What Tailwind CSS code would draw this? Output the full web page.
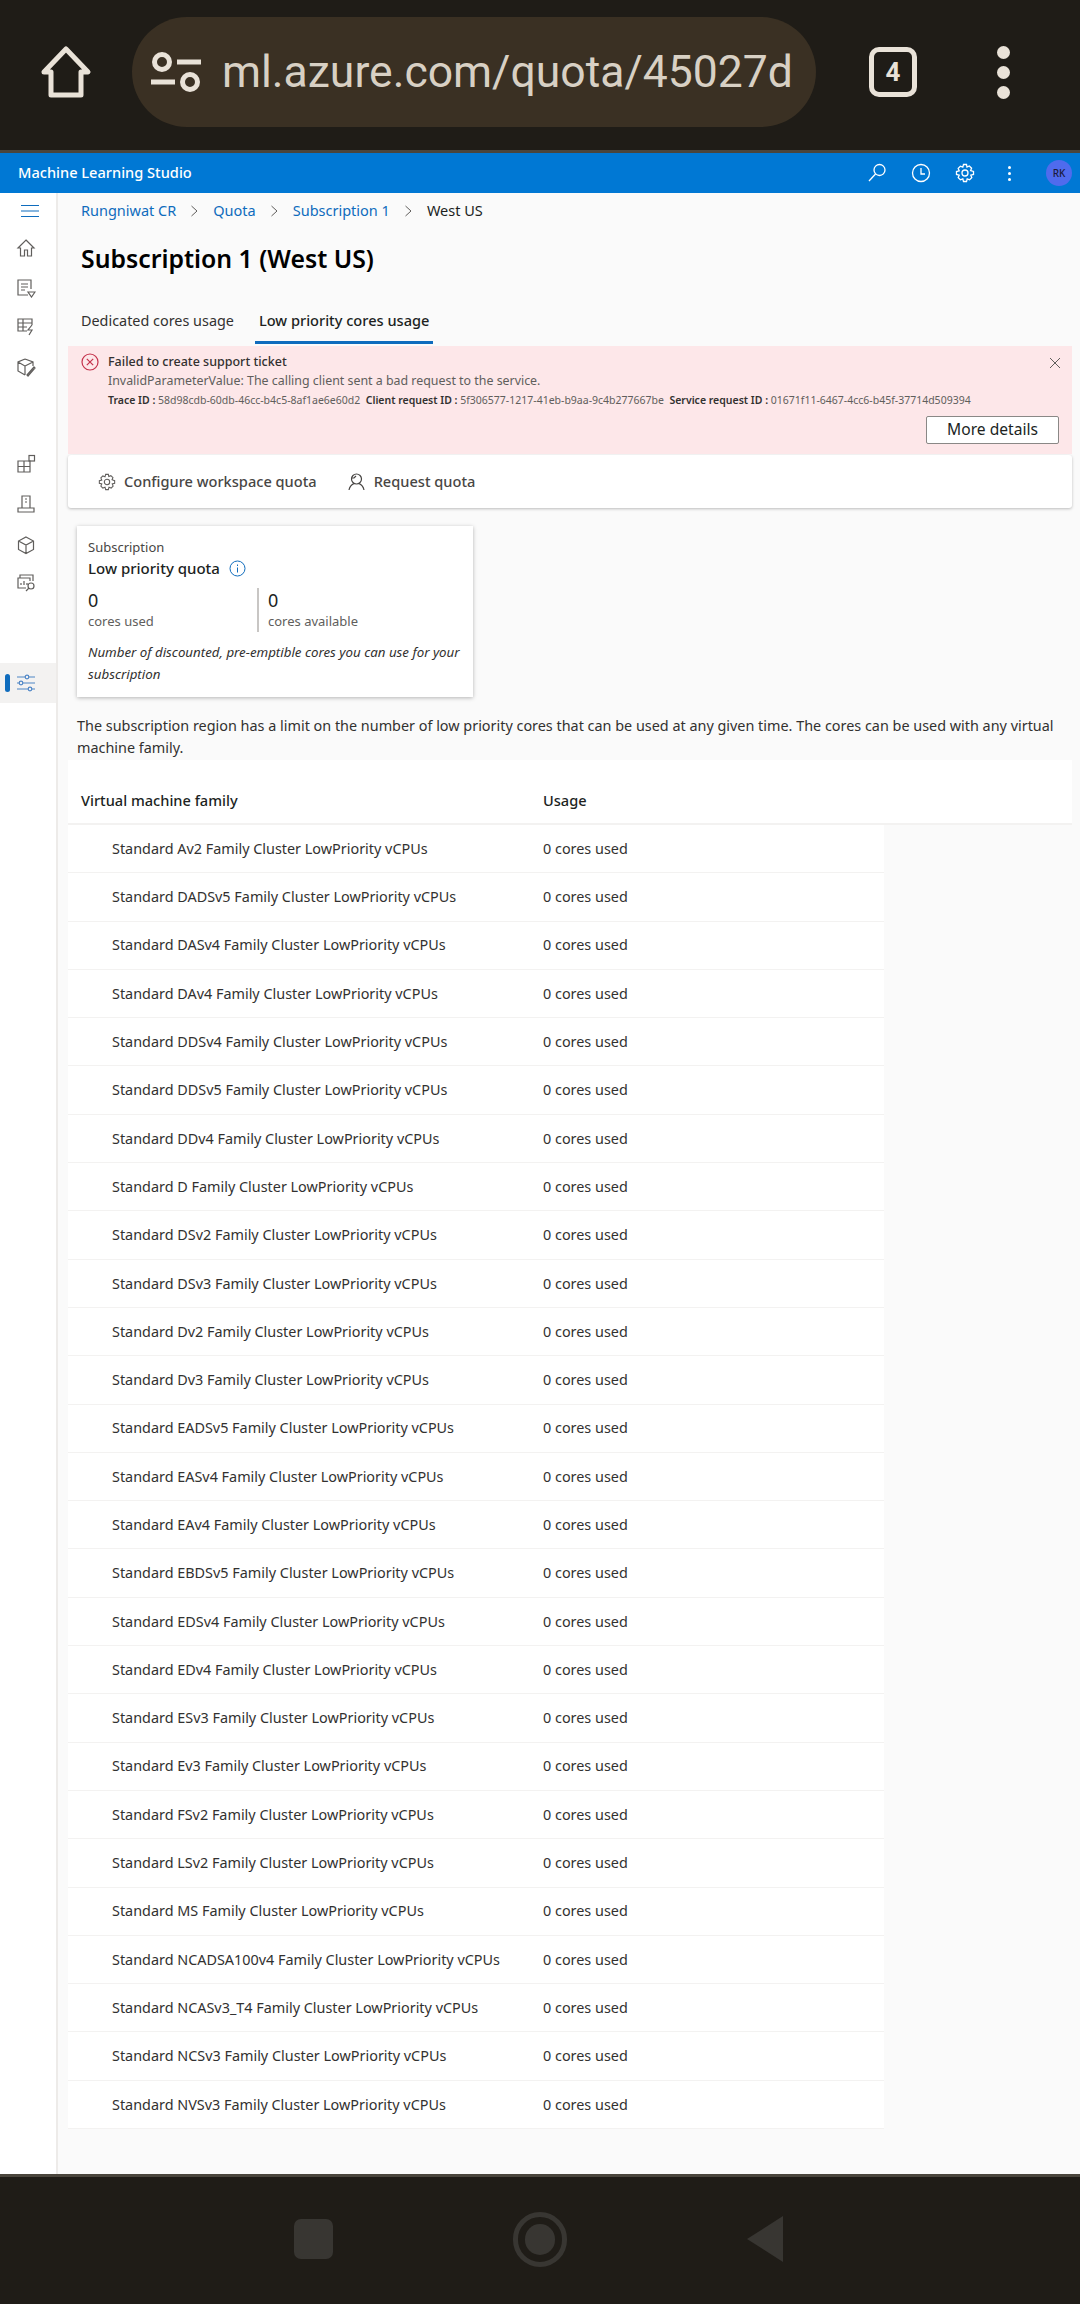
<!DOCTYPE html>
<html lang="en">

<head>
    <meta charset="UTF-8" />
    <title>Quota - Machine Learning Studio</title>
    <script src="https://cdn.jsdelivr.net/npm/@tailwindcss/browser@4"></script>
</head>

<body class="w-[1080px] h-[2304px] overflow-hidden flex flex-col bg-[#fafafa] font-['Noto_Sans','Open_Sans',sans-serif] text-[#201f1e]">
    <!-- Phone browser bar -->
    <header class="h-[153px] shrink-0 bg-[#1f1c17] border-b-[3px] border-[#4a453c] flex items-start pt-[17px] text-[#e9e2d8]">
        <div class="w-[132px] h-[110px] flex items-center justify-center">
            <svg width="52" height="54" viewBox="0 0 52 54" fill="none" stroke="currentColor" stroke-width="5" stroke-linejoin="round">
                <path d="M26 4 L48 27 H41 V50 H11 V27 H4 Z" />
            </svg>
        </div>
        <div class="w-[684px] h-[110px] rounded-[55px] bg-[#3a3023] flex items-center pl-[19px] pr-[23px]">
            <svg class="shrink-0" width="50" height="40" viewBox="0 0 50 40" fill="none" stroke="currentColor" stroke-width="5">
                <circle cx="11" cy="10" r="7.5" />
                <path d="M26 10 H50 M0 30 H24" />
                <circle cx="39" cy="30" r="7.5" />
            </svg>
            <div class="ml-[21px] overflow-hidden whitespace-nowrap text-[44.5px] leading-[60px] font-['Roboto',sans-serif] text-[#d8d0c4]">ml.azure.com/quota/45027d3f</div>
        </div>
        <div class="w-[48px] h-[50px] ml-[53px] mt-[30px] rounded-[10px] border-[5px] border-[#e9e2d8] flex items-center justify-center text-[26px] font-bold font-['Roboto',sans-serif]">4</div>
        <div class="w-[13px] h-[110px] ml-[80px] flex flex-col items-center justify-center gap-[7px]">
            <span class="w-[13px] h-[13px] rounded-full bg-[#e9e2d8]"></span>
            <span class="w-[13px] h-[13px] rounded-full bg-[#e9e2d8]"></span>
            <span class="w-[13px] h-[13px] rounded-full bg-[#e9e2d8]"></span>
        </div>
    </header>

    <!-- Studio top bar -->
    <div class="h-[40px] shrink-0 bg-[#0078d4] flex items-center pl-[18px] pr-[8px] text-white">
        <span class="text-[14.6px] font-medium">Machine Learning Studio</span>
        <div class="ml-auto flex items-center gap-[24px]">
            <svg width="20" height="20" viewBox="0 0 20 20" fill="none" stroke="currentColor" stroke-width="1.3">
                <circle cx="12.5" cy="7" r="5.5" /><path d="M8.5 11 L2 18" />
            </svg>
            <svg width="20" height="20" viewBox="0 0 20 20" fill="none" stroke="currentColor" stroke-width="1.3">
                <circle cx="10" cy="10" r="8.5" /><path d="M10 5 V11 H14" />
            </svg>
            <svg width="20" height="20" viewBox="0 0 20 20" fill="none" stroke="currentColor" stroke-width="1.3">
                <circle cx="10" cy="10" r="3" />
                <path d="M8.5 1.5 H11.5 L12 4 L14.3 3 L16.6 5.2 L15.6 7.5 L18.5 8.5 V11.5 L15.8 12.2 L16.8 14.6 L14.6 16.8 L12.2 15.8 L11.5 18.5 H8.5 L7.8 15.8 L5.4 16.8 L3.2 14.6 L4.2 12.2 L1.5 11.5 V8.5 L4.2 7.8 L3.2 5.4 L5.4 3.2 L7.8 4.2 Z" />
            </svg>
            <div class="w-[20px] mr-[3px] flex flex-col items-center gap-[3px]">
                <span class="w-[3px] h-[3px] rounded-full bg-white"></span>
                <span class="w-[3px] h-[3px] rounded-full bg-white"></span>
                <span class="w-[3px] h-[3px] rounded-full bg-white"></span>
            </div>
            <div class="w-[26px] h-[26px] rounded-full bg-[#4f6bed] text-[#1b1a3a] text-[10px] font-medium flex items-center justify-center">RK</div>
        </div>
    </div>

    <div class="flex-1 flex min-h-0">
        <!-- Left rail -->
        <nav class="w-[58px] shrink-0 bg-white border-r-2 border-[#edebe9] flex flex-col items-center text-[#605e5c] pt-[11px]">
            <svg class="ml-[4px]" width="20" height="14" viewBox="0 0 20 14" stroke="#0f6cbd" stroke-width="1.2"><path d="M1 1.5 H19 M1 7 H19 M1 12.5 H19" /></svg>
            <svg class="mt-[20px] -ml-[5px]" width="20" height="20" viewBox="0 0 20 20" fill="none" stroke="currentColor" stroke-width="1.2"><path d="M10 2 L18 10 H15.5 V18 H11.5 V12 H8.5 V18 H4.5 V10 H2 Z" /></svg>
            <svg class="mt-[20px] -ml-[5px]" width="20" height="20" viewBox="0 0 20 20" fill="none" stroke="currentColor" stroke-width="1.2"><path d="M12 17 H2 V2 H15 V11 M5 6 H12 M5 9 H12 M5 12 H9 M12 14 H19 L15.5 19 Z" /></svg>
            <svg class="mt-[18px] -ml-[5px]" width="20" height="20" viewBox="0 0 20 20" fill="none" stroke="currentColor" stroke-width="1.2"><path d="M11 15 H2 V3 H16 V9 M2 7 H16 M7 3 V15 M2 11 H11 M16 9 L12 14 H16 L13 19" /></svg>
            <svg class="mt-[21px] -ml-[5px]" width="20" height="20" viewBox="0 0 20 20" fill="none" stroke="currentColor" stroke-width="1.2"><path d="M9 2 L17 5 V9 M9 2 L2 5 V14 L9 18 M2 5 L9 9 V18 M9 9 L17 5 M11 18 L18 10 L19 11 L12 19 Z" /></svg>
            <svg class="mt-[77px] -ml-[5px]" width="20" height="20" viewBox="0 0 20 20" fill="none" stroke="currentColor" stroke-width="1.2"><path d="M2 7 H14 V18 H2 Z M8 7 V18 M2 12.5 H14" /><rect x="13" y="1.5" width="5.5" height="5.5" /></svg>
            <svg class="mt-[20px] -ml-[5px]" width="20" height="20" viewBox="0 0 20 20" fill="none" stroke="currentColor" stroke-width="1.2"><path d="M6 14 V2 H14 V14 M9 5 H11 M9 8 H11 M2 18 V14 H18 V18 Z" /></svg>
            <svg class="mt-[21px] -ml-[5px]" width="20" height="20" viewBox="0 0 20 20" fill="none" stroke="currentColor" stroke-width="1.2"><path d="M10 2 L17.5 6 V14.5 L10 18.5 L2.5 14.5 V6 Z M2.5 6 L10 10 L17.5 6 M10 10 V18.5" /></svg>
            <svg class="mt-[18px] -ml-[5px]" width="20" height="20" viewBox="0 0 20 20" fill="none" stroke="currentColor" stroke-width="1.2"><path d="M10 15 H2 V5 H14 V8 M4 5 V2 H17 V8 M5 12 V10 M8 12 V8 M11 12 V10" /><circle cx="15" cy="13" r="3" /><path d="M13 15 L10 18" /></svg>
            <div class="relative mt-[70px] w-full h-[40px] bg-[#f3f2f1] flex items-center justify-center pr-[4px]">
                <span class="absolute left-[5px] top-[11px] w-[5px] h-[18px] rounded bg-[#0f6cbd]"></span>
                <svg width="20" height="18" viewBox="0 0 20 18" fill="none" stroke="#4f86c6" stroke-width="1.2">
                    <path d="M1 3 H19 M1 9 H19 M1 15 H19" /><circle cx="11" cy="3" r="1.8" fill="#f3f2f1" /><circle cx="5" cy="9" r="1.8" fill="#f3f2f1" /><circle cx="14" cy="15" r="1.8" fill="#f3f2f1" />
                </svg>
            </div>
        </nav>

        <!-- Main -->
        <main class="flex-1 min-w-0 pl-[10px] pr-[8px]">
            <div class="pl-[13px] h-[36px] flex items-center text-[14.5px] text-[#0f6cbd]">
                <span>Rungniwat CR</span>
                <svg class="mx-[14px]" width="9" height="12" viewBox="0 0 9 12" fill="none" stroke="#605e5c"><path d="M1.5 1 L7 6 L1.5 11" /></svg>
                <span>Quota</span>
                <svg class="mx-[14px]" width="9" height="12" viewBox="0 0 9 12" fill="none" stroke="#605e5c"><path d="M1.5 1 L7 6 L1.5 11" /></svg>
                <span>Subscription 1</span>
                <svg class="mx-[14px]" width="9" height="12" viewBox="0 0 9 12" fill="none" stroke="#605e5c"><path d="M1.5 1 L7 6 L1.5 11" /></svg>
                <span class="text-[#201f1e]">West US</span>
            </div>
            <h1 class="pl-[13px] mt-[11px] text-[24.8px] leading-[36px] font-semibold text-black">Subscription 1 (West US)</h1>

            <div class="flex mt-[22px] h-[48px] text-[14.4px]">
                <div class="px-[13px] pt-[12px] text-[#323130]">Dedicated cores usage</div>
                <div class="ml-[8px] px-[4px] pt-[12px] text-[14.6px] font-medium text-[#201f1e] border-b-[3px] border-[#0f6cbd] h-[46px]">Low priority cores usage</div>
            </div>

            <!-- Error banner -->
            <div class="h-[108px] bg-[#fde7e9] pl-[13px] pr-[12px] pt-[6px] relative">
                <div class="flex items-center gap-[9px] text-[12.5px] leading-[20px] font-medium text-[#323130]">
                    <svg width="18" height="18" viewBox="0 0 18 18" fill="none" stroke="#c4314b" stroke-width="1.2"><circle cx="9" cy="9" r="8" /><path d="M5.8 5.8 L12.2 12.2 M12.2 5.8 L5.8 12.2" /></svg>
                    Failed to create support ticket
                </div>
                <div class="pl-[27px] text-[12.4px] leading-[18px] text-[#605e5c]">InvalidParameterValue: The calling client sent a bad request to the service.</div>
                <div class="pl-[27px] mt-[1px] text-[10.5px] leading-[18px] whitespace-nowrap text-[#605e5c]"><span class="font-semibold text-[#323130]">Trace ID :</span> 58d98cdb-60db-46cc-b4c5-8af1ae6e60d2 &nbsp;<span class="font-semibold text-[#323130]">Client request ID :</span> 5f306577-1217-41eb-b9aa-9c4b277667be &nbsp;<span class="font-semibold text-[#323130]">Service request ID :</span> 01671f11-6467-4cc6-b45f-37714d509394</div>
                <svg class="absolute right-[11px] top-[11px]" width="12" height="12" viewBox="0 0 12 12" stroke="#605e5c"><path d="M1 1 L11 11 M11 1 L1 11" /></svg>
                <button class="absolute right-[13px] bottom-[10px] w-[133px] h-[28px] bg-white border border-[#8a8886] rounded-[2px] text-[15.6px] text-[#201f1e]">More details</button>
            </div>

            <!-- Toolbar -->
            <div class="h-[53px] mt-[1px] bg-white rounded-[3px] shadow-[0_1px_3px_rgba(0,0,0,0.25)] flex items-center pl-[30px] text-[14.6px] font-medium text-[#484644]">
                <svg width="18" height="18" viewBox="0 0 20 20" fill="none" stroke="#605e5c" stroke-width="1.2">
                    <circle cx="10" cy="10" r="3" />
                    <path d="M8.5 1.5 H11.5 L12 4 L14.3 3 L16.6 5.2 L15.6 7.5 L18.5 8.5 V11.5 L15.8 12.2 L16.8 14.6 L14.6 16.8 L12.2 15.8 L11.5 18.5 H8.5 L7.8 15.8 L5.4 16.8 L3.2 14.6 L4.2 12.2 L1.5 11.5 V8.5 L4.2 7.8 L3.2 5.4 L5.4 3.2 L7.8 4.2 Z" />
                </svg>
                <span class="ml-[8px]">Configure workspace quota</span>
                <svg class="ml-[31px]" width="17" height="20" viewBox="0 0 17 20" fill="none" stroke="#484644" stroke-width="1.2"><circle cx="8.5" cy="7" r="5" /><path d="M1 18 C2 13 5 12 6 11.5 M16 18 C15 13 12 12 11 11.5 M3.5 6 H6 L8 4" /></svg>
                <span class="ml-[9px]">Request quota</span>
            </div>

            <!-- Quota card -->
            <div class="w-[396px] h-[171px] ml-[9px] mt-[18px] bg-white shadow-[0_1px_4px_rgba(0,0,0,0.28)] px-[11px] pt-[12px]">
                <div class="text-[13px] leading-[18px] text-[#484644]">Subscription</div>
                <div class="flex items-center text-[15px] leading-[24px] font-medium text-[#201f1e]">
                    Low priority quota
                    <svg class="ml-[9px]" width="17" height="17" viewBox="0 0 17 17" fill="none" stroke="#0f6cbd"><circle cx="8.5" cy="8.5" r="7.5" /><path d="M8.5 7.5 V12.5 M8.5 4.5 V6" /></svg>
                </div>
                <div class="flex mt-[8px] h-[44px]">
                    <div class="w-[171px] border-r-2 border-[#c8c6c4]">
                        <div class="text-[18px] leading-[24px]">0</div>
                        <div class="text-[13px] leading-[19px] text-[#605e5c]">cores used</div>
                    </div>
                    <div class="pl-[9px]">
                        <div class="text-[18px] leading-[24px]">0</div>
                        <div class="text-[13px] leading-[19px] text-[#605e5c]">cores available</div>
                    </div>
                </div>
                <p class="mt-[9px] text-[13.3px] leading-[22px] italic text-[#323130]">Number of discounted, pre-emptible cores you can use for your subscription</p>
            </div>

            <p class="ml-[9px] mt-[18px] text-[14.4px] leading-[22px] text-[#323130]">The subscription region has a limit on the number of low priority cores that can be used at any given time. The cores can be used with any virtual machine family.</p>

            <!-- Table -->
            <div class="h-[65px] mt-[1px] bg-white border-b-2 border-[#f3f2f1] flex items-center font-medium text-[14.6px] pt-[18px]">
                <span class="w-[475px] pl-[13px]">Virtual machine family</span>
                <span>Usage</span>
            </div>
            <div id="rows" class="w-[816px]"></div>
        </main>
    </div>

    <!-- Phone nav bar -->
    <footer class="h-[130px] shrink-0 bg-[#1f1c17] border-t-[3px] border-[#4a453c] flex items-center justify-center gap-[180px] pb-[3px] pr-[3px]">
        <div class="w-[39px] h-[40px] rounded-[7px] bg-[#383632]"></div>
        <div class="w-[54px] h-[55px] rounded-full border-[5px] border-[#383632] flex items-center justify-center">
            <div class="w-[30px] h-[31px] rounded-full bg-[#383632]"></div>
        </div>
        <svg width="36" height="46" viewBox="0 0 36 46" fill="#383632"><path d="M36 0 V46 L0 23 Z" /></svg>
    </footer>

    <script>
        const families = [
            "Av2", "DADSv5", "DASv4", "DAv4", "DDSv4", "DDSv5", "DDv4", "D", "DSv2", "DSv3", "Dv2", "Dv3", "EADSv5",
            "EASv4", "EAv4", "EBDSv5", "EDSv4", "EDv4", "ESv3", "Ev3", "FSv2", "LSv2", "MS", "NCADSA100v4", "NCASv3_T4",
            "NCSv3", "NVSv3"
        ];
        document.getElementById("rows").innerHTML = families.map((name) => `
            <div class="h-[48.3px] bg-white border-b border-[#f3f2f1] flex items-center text-[14.4px] text-[#323130]">
                <span class="w-[475px] pl-[44px] whitespace-nowrap">Standard ${name} Family Cluster LowPriority vCPUs</span>
                <span>0 cores used</span>
            </div>`).join("");
    </script>
</body>

</html>
